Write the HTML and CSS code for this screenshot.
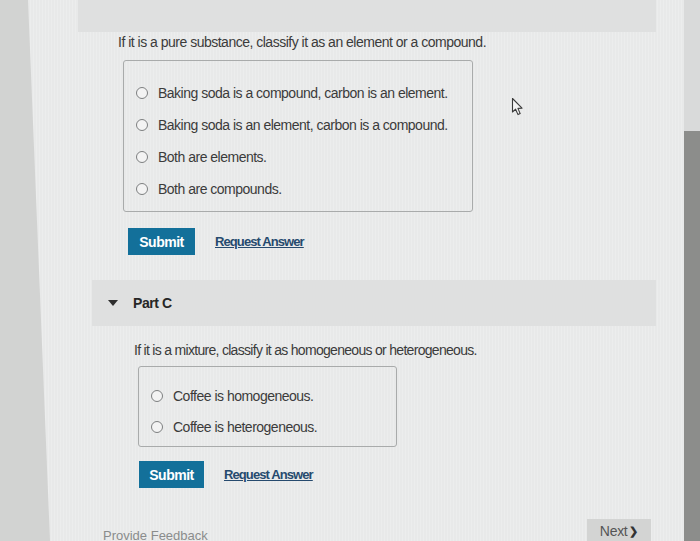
FILE: index.html
```html
<!DOCTYPE html>
<html>
<head>
<meta charset="utf-8">
<link rel="stylesheet" href="styles.css">
</head>
<body>
<div class="screen">
  <div class="left-strip"></div>
  <div class="page">
    <div class="col">
      <div class="band-top"></div>
      <p class="question q1">If it is a pure substance, classify it as an element or a compound.</p>
      <div class="options opts1">
        <label class="opt"><span class="radio"></span><span>Baking soda is a compound, carbon is an element.</span></label>
        <label class="opt"><span class="radio"></span><span>Baking soda is an element, carbon is a compound.</span></label>
        <label class="opt"><span class="radio"></span><span>Both are elements.</span></label>
        <label class="opt"><span class="radio"></span><span>Both are compounds.</span></label>
      </div>
      <div class="actions act1">
        <button class="submit">Submit</button>
        <a class="request" href="#">Request Answer</a>
      </div>

      <div class="partc">
        <div class="band-part">
          <span class="tri"></span>
          <span class="part-title">Part C</span>
        </div>
        <p class="question q2">If it is a mixture, classify it as homogeneous or heterogeneous.</p>
        <div class="options opts2">
          <label class="opt"><span class="radio"></span><span>Coffee is homogeneous.</span></label>
          <label class="opt"><span class="radio"></span><span>Coffee is heterogeneous.</span></label>
        </div>
        <div class="actions act2">
          <button class="submit">Submit</button>
          <a class="request" href="#">Request Answer</a>
        </div>
        <div class="footer">
          <span class="feedback">Provide Feedback</span>
          <span class="next">Next <span class="chev">&#10095;</span></span>
        </div>
      </div>
    </div>
  </div>
  <div class="scroll">
    <div class="scroll-track"></div>
    <div class="scroll-thumb"></div>
  </div>
</div>
<svg class="cursor" width="14" height="20" viewBox="0 0 14 20">
  <path d="M1.5 1.5 L1.5 15 L4.6 12.2 L7 17.6 L9.2 16.6 L6.9 11.4 L11 11.2 Z" fill="#f4f4f4" stroke="#3a3a3a" stroke-width="1.1" stroke-linejoin="round"/>
</svg>
</body>
</html>
```

FILE: styles.css
```css
html, body {
  margin: 0;
  padding: 0;
  width: 700px;
  height: 541px;
  overflow: hidden;
  background: #e8e9e9;
  font-family: "Liberation Sans", Arial, sans-serif;
  color: #3b3b3b;
}

.screen {
  display: flex;
  width: 700px;
  height: 541px;
  position: relative;
  background-image: repeating-linear-gradient(90deg, rgba(255,255,255,0.18) 0 1px, rgba(0,0,0,0) 1px 3px);
}

.left-strip {
  width: 50px;
  flex: none;
  background: #d2d3d2;
  clip-path: polygon(0 0, 56% 0, 100% 100%, 0 100%);
  margin-right: -22px;
}

.page {
  flex: 1;
  min-width: 0;
}

.col {
  margin-left: 50px;
  width: 578px;
}

.band-top {
  height: 32px;
  background: #dfe0e0;
}

.question {
  margin: 0;
  font-size: 14px;
  letter-spacing: -0.5px;
  line-height: 18px;
}

.q1 {
  margin-top: 1px;
  padding-left: 40px;
}

.options {
  border: 1px solid #a9abab;
  border-radius: 3px;
  box-sizing: border-box;
  display: flex;
  flex-direction: column;
}

.opts1 {
  margin-top: 9px;
  margin-left: 45px;
  width: 350px;
  height: 152px;
  padding-top: 16px;
}

.opts1 .opt {
  height: 32px;
}

.opt {
  display: flex;
  align-items: center;
  height: 31px;
  font-size: 14px;
  letter-spacing: -0.5px;
  color: #3b3b3b;
}

.radio {
  width: 10px;
  height: 10px;
  border: 1.6px solid #7d7f80;
  border-radius: 50%;
  background: #f3f3f3;
  margin-left: 12px;
  margin-right: 10px;
  flex: none;
}

.actions {
  display: flex;
  align-items: center;
  gap: 20px;
}

.act1 {
  margin-top: 16px;
  margin-left: 50px;
}

.submit {
  width: 67px;
  height: 27px;
  border: none;
  background: #13709a;
  color: #ffffff;
  font-family: "Liberation Sans", Arial, sans-serif;
  font-weight: bold;
  font-size: 14px;
  letter-spacing: -0.5px;
  padding: 0;
}

.request {
  color: #264a6e;
  font-size: 13px;
  font-weight: bold;
  letter-spacing: -0.9px;
  text-decoration: underline;
}

.partc {
  margin-left: 14px;
  margin-top: 25px;
}

.band-part {
  height: 46px;
  background: #dfe0e0;
  display: flex;
  align-items: center;
}

.tri {
  width: 0;
  height: 0;
  border-left: 5px solid transparent;
  border-right: 5px solid transparent;
  border-top: 6px solid #2e2e2e;
  margin-left: 16px;
  margin-right: 15px;
}

.part-title {
  font-size: 14px;
  font-weight: bold;
  letter-spacing: -0.4px;
  color: #262626;
}

.q2 {
  margin-top: 15px;
  padding-left: 42px;
  letter-spacing: -0.7px;
}

.opts2 {
  margin-top: 7px;
  margin-left: 46px;
  width: 259px;
  height: 81px;
  padding-top: 13px;
}

.act2 {
  margin-top: 14px;
  margin-left: 47px;
}

.act2 .submit {
  width: 65px;
}

.footer {
  display: flex;
  justify-content: space-between;
  align-items: flex-start;
  margin-top: 31px;
  padding-left: 11px;
  padding-right: 5px;
}

.feedback {
  margin-top: 9px;
  font-size: 13px;
  color: #8a8c8c;
}

.next {
  width: 64px;
  height: 24px;
  background: #d3d4d3;
  color: #555;
  font-size: 14px;
  letter-spacing: -0.3px;
  display: flex;
  align-items: center;
  justify-content: center;
  gap: 2px;
}

.chev {
  font-size: 11px;
  color: #333;
  font-weight: bold;
}

.scroll {
  width: 16px;
  flex: none;
  display: flex;
  flex-direction: column;
}

.scroll-track {
  height: 131px;
  background: #d9dada;
}

.scroll-thumb {
  flex: 1;
  background: #8c8d8b;
}

.cursor {
  position: absolute;
  left: 511px;
  top: 97px;
}
```
